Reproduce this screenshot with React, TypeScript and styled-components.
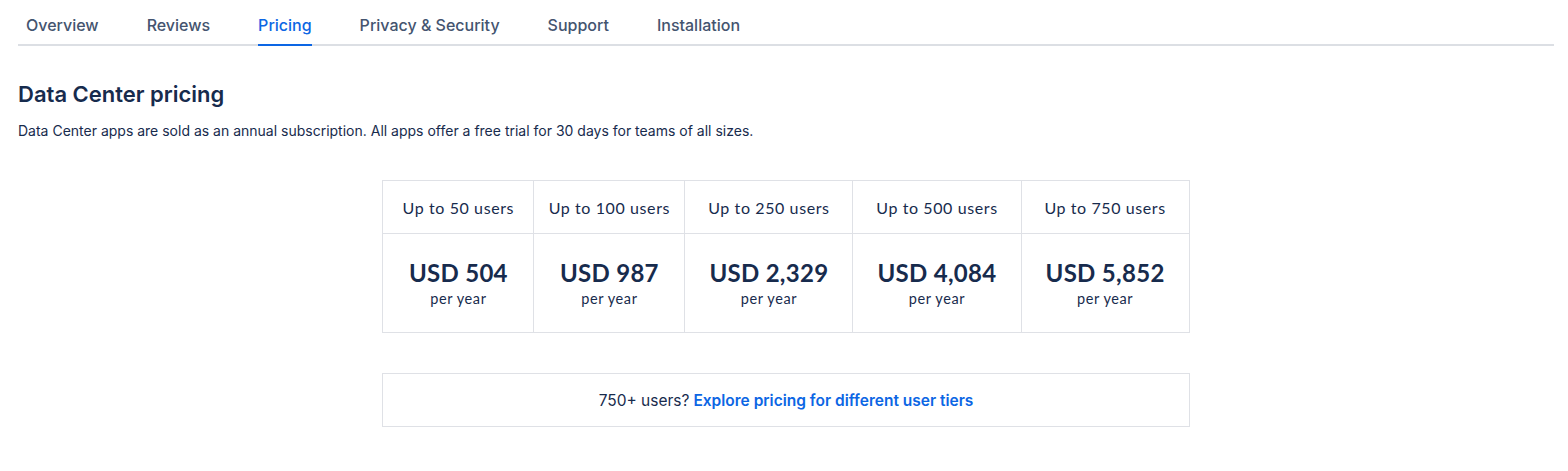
import styled, { createGlobalStyle } from "styled-components";

const GlobalStyle = createGlobalStyle`
  html, body {
    margin: 0;
    padding: 0;
    background: #ffffff;
  }
  body {
    font-family: Inter, "Noto Sans", sans-serif;
    color: #172b4d;
  }
`;

const tabs = ["Overview", "Reviews", "Pricing", "Privacy & Security", "Support", "Installation"];

const tiers = [
  { users: "Up to 50 users", price: "USD 504" },
  { users: "Up to 100 users", price: "USD 987" },
  { users: "Up to 250 users", price: "USD 2,329" },
  { users: "Up to 500 users", price: "USD 4,084" },
  { users: "Up to 750 users", price: "USD 5,852" },
];

const Page = styled.div`
  padding: 0 14px 0 18px;
`;

const TabBar = styled.nav`
  display: flex;
  gap: 48px;
  padding: 0 8px;
  border-bottom: 2px solid #dcdfe4;
`;

const Tab = styled.a<{ $active?: boolean }>`
  display: block;
  padding: 14px 0 8px;
  margin-bottom: -2px;
  font-size: 16px;
  font-weight: 500;
  line-height: 22px;
  color: ${({ $active }) => ($active ? "#0c66e4" : "#44546f")};
  border-bottom: 2px solid ${({ $active }) => ($active ? "#0c66e4" : "transparent")};
  text-decoration: none;
  cursor: pointer;
`;

const Title = styled.h2`
  margin: 34px 0 0;
  font-size: 22px;
  font-weight: 600;
  line-height: 28px;
  color: #172b4d;
`;

const Intro = styled.p`
  margin: 13px 0 0;
  font-size: 14px;
  line-height: 20px;
  color: #172b4d;
`;

const Center = styled.div`
  display: flex;
  flex-direction: column;
  align-items: center;
  margin-top: 39px;
`;

const Stack = styled.div`
  display: flex;
  flex-direction: column;
  gap: 40px;
`;

const PriceTable = styled.table`
  border-collapse: collapse;
  font-family: Lato, "Noto Sans", sans-serif;
`;

const HeadCell = styled.th`
  min-width: 134px;
  height: 52px;
  padding: 0 8px;
  border: 1px solid #dfe1e6;
  font-size: 16px;
  font-weight: 400;
  letter-spacing: 0.6px;
  color: #172b4d;
  white-space: nowrap;
`;

const PriceCell = styled.td`
  height: 98px;
  padding: 0 24px;
  border: 1px solid #dfe1e6;
  text-align: center;
  vertical-align: middle;
  white-space: nowrap;
`;

const Price = styled.div`
  font-size: 24px;
  font-weight: 700;
  line-height: 30px;
  letter-spacing: 0.3px;
  color: #172b4d;
`;

const Per = styled.div`
  margin-top: 2px;
  font-size: 14.5px;
  line-height: 18px;
  letter-spacing: 0.6px;
  color: #172b4d;
`;

const MoreBox = styled.div`
  box-sizing: border-box;
  width: 100%;
  height: 54px;
  display: flex;
  align-items: center;
  justify-content: center;
  gap: 4px;
  border: 1px solid #dfe1e6;
  font-size: 15.5px;
  color: #172b4d;
`;

const Link = styled.a`
  color: #0c66e4;
  font-weight: 600;
  text-decoration: none;
  cursor: pointer;
`;

export default function App() {
  return (
    <>
      <GlobalStyle />
      <Page>
        <TabBar>
          {tabs.map((t) => (
            <Tab key={t} $active={t === "Pricing"}>
              {t}
            </Tab>
          ))}
        </TabBar>
        <Title>Data Center pricing</Title>
        <Intro>
          Data Center apps are sold as an annual subscription. All apps offer a free trial for 30 days for teams of all sizes.
        </Intro>
        <Center>
          <Stack>
            <PriceTable>
              <thead>
                <tr>
                  {tiers.map((t) => (
                    <HeadCell key={t.users}>{t.users}</HeadCell>
                  ))}
                </tr>
              </thead>
              <tbody>
                <tr>
                  {tiers.map((t) => (
                    <PriceCell key={t.users}>
                      <Price>{t.price}</Price>
                      <Per>per year</Per>
                    </PriceCell>
                  ))}
                </tr>
              </tbody>
            </PriceTable>
            <MoreBox>
              750+ users? <Link>Explore pricing for different user tiers</Link>
            </MoreBox>
          </Stack>
        </Center>
      </Page>
    </>
  );
}
